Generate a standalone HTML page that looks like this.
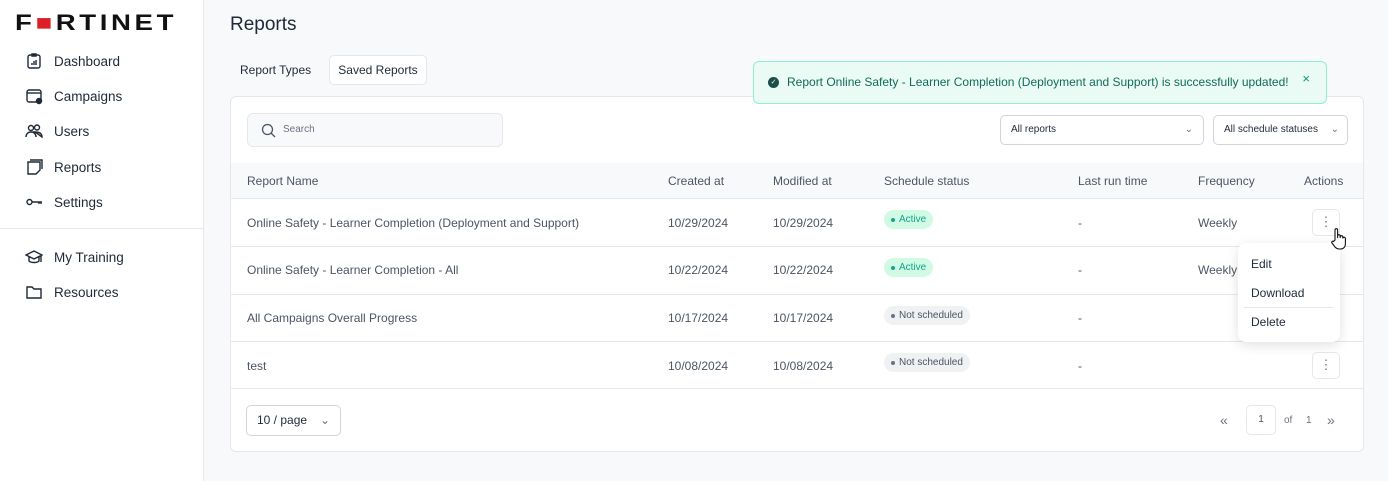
<!DOCTYPE html>
<html><head><style>
*{box-sizing:border-box;margin:0;padding:0}
body{width:1388px;height:481px;overflow:hidden;font-family:"Liberation Sans",sans-serif;background:#f8f9fb;position:relative;color:#1f2937}
.side{position:absolute;left:0;top:0;width:204px;height:481px;background:#fff;border-right:1px solid #e5e7eb}
.logo{position:absolute;left:15px;top:10px;font-size:23px;font-weight:bold;letter-spacing:3px;color:#111;transform:scale(1.2,0.95);transform-origin:left top;white-space:nowrap}
.logo b{color:#da2127}
.nav{position:absolute;left:25px;font-size:13.5px;color:#1f2937;display:flex;align-items:center}
.nav svg{width:18px;height:18px;margin-right:11px}
.hr{position:absolute;left:0;top:228px;width:203px;border-top:1px solid #e5e7eb}
.abs{position:absolute}
.card{position:absolute;left:230px;top:96px;width:1134px;height:356px;background:#fff;border:1px solid #e5e7eb;border-radius:6px}
.th{position:absolute;top:66px;left:0;width:1132px;height:36px;background:#f8f9fb;border-bottom:1px solid #e5e7eb}
.t{position:absolute;font-size:12px;color:#4b5563}
.h{position:absolute;font-size:12px;color:#4b5563;top:77px}
.row{position:absolute;left:0;width:1132px;border-bottom:1px solid #e5e7eb}
.badge{position:absolute;font-size:10px;border-radius:10px;padding:3px 7px 3px 15px;height:19px;line-height:13px}
.badge:before{content:"";position:absolute;left:7px;top:8px;width:4px;height:4px;border-radius:50%;background:currentColor}
.act{background:#d1fae5;color:#14a58a}
.ns{background:#f0f1f3;color:#4b5563}
.ns:before{background:#6b7280}
.kb{position:absolute;width:28px;height:27px;border:1px solid #e5e7eb;border-radius:5px;background:#fff;text-align:center;font-size:13px;line-height:24px;color:#6b7280}
</style></head><body>
<div class="side">
<div class="logo">F<b>■</b>RTINET</div>
<div class="nav" style="top:52px"><svg viewBox="0 0 18 18" fill="none" stroke="#1f2937" stroke-width="1.4"><rect x="3" y="3" width="12" height="13" rx="2"/><path d="M7 2h4v2H7zM7 13v-2M9 13v-4M11 13v-5"/></svg>Dashboard</div>
<div class="nav" style="top:87px"><svg viewBox="0 0 18 18" fill="none" stroke="#1f2937" stroke-width="1.4"><rect x="2" y="3" width="14" height="12" rx="2"/><path d="M2 6h14"/><circle cx="14" cy="14" r="2.5" fill="#1f2937"/></svg>Campaigns</div>
<div class="nav" style="top:122px"><svg viewBox="0 0 18 18" fill="none" stroke="#1f2937" stroke-width="1.4"><circle cx="6" cy="6" r="2.5"/><circle cx="12" cy="5.5" r="2.5"/><path d="M1 15c0-3 2-5 5-5s5 2 5 5M10 10c4 0 7 1 7 5z"/></svg>Users</div>
<div class="nav" style="top:158px"><svg viewBox="0 0 18 18" fill="none" stroke="#1f2937" stroke-width="1.4"><path d="M3 4h12v8l-4 4H3zM5 2h12v9"/></svg>Reports</div>
<div class="nav" style="top:193px"><svg viewBox="0 0 18 18" fill="none" stroke="#1f2937" stroke-width="1.4"><circle cx="4.5" cy="9" r="2.5"/><path d="M7 9h10M14 9v2M16 9v2"/></svg>Settings</div>
<div class="hr"></div>
<div class="nav" style="top:248px"><svg viewBox="0 0 18 18" fill="none" stroke="#1f2937" stroke-width="1.4"><path d="M1 7l8-4 8 4-8 4zM4 9v4c2 2 8 2 10 0V9M16 8v6"/></svg>My Training</div>
<div class="nav" style="top:283px"><svg viewBox="0 0 18 18" fill="none" stroke="#1f2937" stroke-width="1.4"><path d="M2 4h5l2 2h7v9H2z"/></svg>Resources</div>
</div>
<div class="abs" style="left:230px;top:14px;font-size:19px;color:#1f2937">Reports</div>
<div class="abs" style="left:240px;top:63px;font-size:12px;color:#1f2937">Report Types</div>
<div class="abs" style="left:329px;top:55px;width:98px;height:30px;border:1px solid #e5e7eb;border-radius:5px;background:#fff;font-size:12px;line-height:28px;text-align:center">Saved Reports</div>
<div class="card">
<div class="abs" style="left:16px;top:16px;width:256px;height:34px;border:1px solid #e5e7eb;border-radius:6px;background:#f8f9fb;font-size:10px;color:#6b7280;line-height:32px;padding-left:35px">Search<svg style="position:absolute;left:13px;top:9px" width="15" height="15" viewBox="0 0 15 15" fill="none" stroke="#4b5563" stroke-width="1.3"><circle cx="6.5" cy="6.5" r="5"/><path d="M10 10l4 4"/></svg></div>
<div class="abs" style="left:769px;top:18px;width:204px;height:30px;border:1px solid #d1d5db;border-radius:5px;font-size:10px;line-height:28px;padding-left:10px">All reports<span style="position:absolute;right:10px;color:#6b7280">⌄</span></div>
<div class="abs" style="left:982px;top:18px;width:135px;height:30px;border:1px solid #d1d5db;border-radius:5px;font-size:10px;line-height:28px;padding-left:10px">All schedule statuses<span style="position:absolute;right:8px;color:#6b7280">⌄</span></div>
<div class="th"></div>
<div class="h" style="left:16px">Report Name</div><div class="h" style="left:437px">Created at</div><div class="h" style="left:542px">Modified at</div><div class="h" style="left:653px">Schedule status</div><div class="h" style="left:847px">Last run time</div><div class="h" style="left:967px">Frequency</div><div class="h" style="left:1073px">Actions</div>
<div class="row" style="top:102px;height:48px"></div><div class="row" style="top:150px;height:48px"></div><div class="row" style="top:198px;height:47px"></div><div class="row" style="top:245px;height:47px"></div>
<div class="t" style="left:16px;top:119px">Online Safety - Learner Completion (Deployment and Support)</div><div class="t" style="left:437px;top:119px">10/29/2024</div><div class="t" style="left:542px;top:119px">10/29/2024</div><div class="badge act" style="left:653px;top:113px">Active</div><div class="t" style="left:847px;top:119px">-</div><div class="t" style="left:967px;top:119px">Weekly</div><div class="kb" style="left:1081px;top:112px">⋮</div>
<div class="t" style="left:16px;top:166px">Online Safety - Learner Completion - All</div><div class="t" style="left:437px;top:166px">10/22/2024</div><div class="t" style="left:542px;top:166px">10/22/2024</div><div class="badge act" style="left:653px;top:161px">Active</div><div class="t" style="left:847px;top:166px">-</div><div class="t" style="left:967px;top:166px">Weekly</div>
<div class="t" style="left:16px;top:214px">All Campaigns Overall Progress</div><div class="t" style="left:437px;top:214px">10/17/2024</div><div class="t" style="left:542px;top:214px">10/17/2024</div><div class="badge ns" style="left:653px;top:209px">Not scheduled</div><div class="t" style="left:847px;top:214px">-</div>
<div class="t" style="left:16px;top:262px">test</div><div class="t" style="left:437px;top:262px">10/08/2024</div><div class="t" style="left:542px;top:262px">10/08/2024</div><div class="badge ns" style="left:653px;top:256px">Not scheduled</div><div class="t" style="left:847px;top:262px">-</div><div class="kb" style="left:1081px;top:255px">⋮</div>
<div class="abs" style="left:15px;top:308px;width:95px;height:31px;border:1px solid #d1d5db;border-radius:5px;font-size:12px;line-height:29px;padding-left:10px">10 / page<span style="position:absolute;right:10px;color:#6b7280">⌄</span></div>
<div class="abs" style="left:989px;top:315px;font-size:14px;color:#6b7280">«</div>
<div class="abs" style="left:1015px;top:308px;width:30px;height:30px;border:1px solid #e5e7eb;border-radius:5px;font-size:10px;line-height:28px;text-align:center;color:#4b5563">1</div>
<div class="abs" style="left:1053px;top:318px;font-size:10px;color:#6b7280">of</div><div class="abs" style="left:1075px;top:318px;font-size:10px;color:#6b7280">1</div>
<div class="abs" style="left:1096px;top:315px;font-size:14px;color:#6b7280">»</div>
</div>
<div class="abs" style="left:1238px;top:243px;width:102px;height:99px;background:#fff;border-radius:8px;box-shadow:0 3px 12px rgba(0,0,0,.12)">
<div class="abs" style="left:13px;top:14px;font-size:12px">Edit</div>
<div class="abs" style="left:13px;top:43px;font-size:12px">Download</div>
<div class="abs" style="left:6px;top:64px;width:90px;border-top:1px solid #e5e7eb"></div>
<div class="abs" style="left:13px;top:72px;font-size:12px">Delete</div>
</div>
<svg class="abs" style="left:1330px;top:227px" width="18" height="24" viewBox="0 0 18 24" fill="#fff" stroke="#111" stroke-width="1.1"><path d="M5 13V3a1.3 1.3 0 0 1 2.6 0v8V9a1.3 1.3 0 0 1 2.6 0v2-1a1.3 1.3 0 0 1 2.6 0v1.5a1.3 1.3 0 0 1 2.6 0V17c0 3-2 5-5 5H9c-2 0-3-1-4-2l-3-4c-.8-1 .5-2.5 1.5-1.5z"/></svg>
<div class="abs" style="left:753px;top:61px;width:574px;height:43px;background:#e9fbf4;border:1px solid #8ff0d1;border-radius:6px;font-size:12px;color:#136b55;line-height:41px;padding-left:33px">Report Online Safety - Learner Completion (Deployment and Support) is successfully updated!
<span class="abs" style="left:14px;top:15px;width:11px;height:11px;border-radius:50%;background:#1d4f48;color:#fff;font-size:7px;line-height:11px;text-align:center">✓</span>
<span class="abs" style="right:16px;top:-4px;color:#0f9b77;font-size:13px">×</span></div>
</body></html>
